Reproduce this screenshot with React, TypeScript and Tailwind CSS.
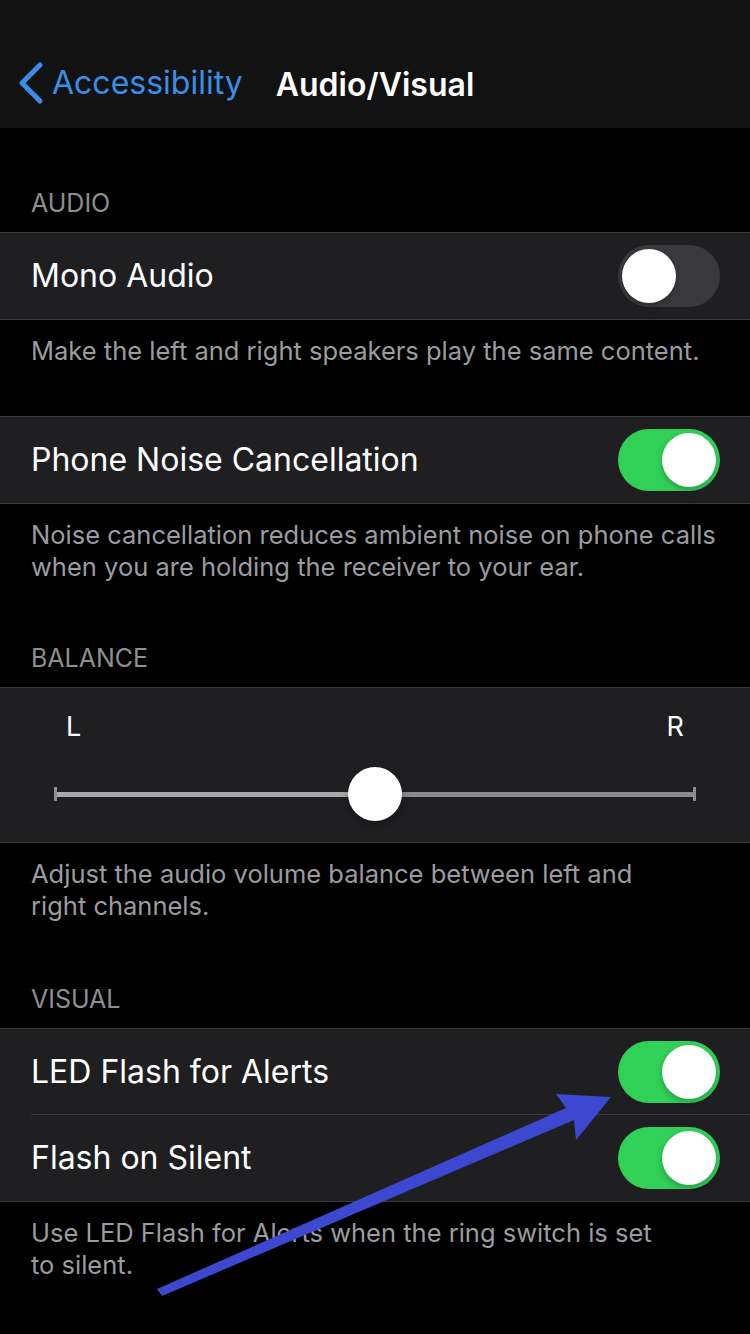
const font = { fontFamily: 'Inter, "Noto Sans", sans-serif' };

function Toggle({ on }: { on: boolean }) {
  return (
    <div
      className={`flex h-[62px] w-[102px] shrink-0 items-center rounded-full p-[4px] ${
        on ? 'justify-end bg-[#31d158]' : 'justify-start bg-[#3a3a3d]'
      }`}
    >
      <div className="h-[54px] w-[54px] rounded-full bg-white shadow-[0_3px_6px_rgba(0,0,0,0.25)]" />
    </div>
  );
}

function SectionLabel({ children }: { children: string }) {
  return (
    <div className="h-[32px] px-[31px] text-[25px] leading-[32px] text-[#8e8e93]">{children}</div>
  );
}

function Footer({ children }: { children: React.ReactNode }) {
  return (
    <p className="px-[31px] pt-[15px] text-[25.5px] leading-[32px] text-[#9b9ba0]">{children}</p>
  );
}

function Row({ label, on, divider }: { label: string; on: boolean; divider?: boolean }) {
  return (
    <div className="pl-[31px]">
      <div
        className={`flex h-[86px] items-center justify-between pr-[30px] ${
          divider ? 'border-b border-[#39393b]' : ''
        }`}
      >
        <span className="text-[32px] text-white">{label}</span>
        <Toggle on={on} />
      </div>
    </div>
  );
}

export default function App() {
  return (
    <div className="relative h-[1334px] w-[750px] overflow-hidden bg-black" style={font}>
      {/* nav bar */}
      <header className="relative flex h-[128px] items-end bg-[#121212] pb-[23px]">
        <div className="flex items-center pl-[16px]">
          <svg width="30" height="44" viewBox="0 0 30 44" className="mr-[6px]">
            <path
              d="M24 4 L6 22 L24 40"
              fill="none"
              stroke="#3a8ee8"
              strokeWidth="5"
              strokeLinecap="round"
              strokeLinejoin="round"
            />
          </svg>
          <span className="text-[32px] leading-[40px] text-[#3a8ee8]">Accessibility</span>
        </div>
        <span className="absolute left-0 right-0 bottom-[23px] text-center text-[32px] font-semibold leading-[40px] text-white">
          Audio/Visual
        </span>
      </header>

      {/* audio */}
      <div className="pt-[59px]">
        <SectionLabel>AUDIO</SectionLabel>
        <div className="mt-[13px] border-y border-[#39393b] bg-[#1f1f21]">
          <Row label="Mono Audio" on={false} />
        </div>
        <Footer>Make the left and right speakers play the same content.</Footer>
      </div>

      <div className="pt-[49px]">
        <div className="border-y border-[#39393b] bg-[#1f1f21]">
          <Row label="Phone Noise Cancellation" on={true} />
        </div>
        <Footer>
          Noise cancellation reduces ambient noise on phone calls
          <br />
          when you are holding the receiver to your ear.
        </Footer>
      </div>

      {/* balance */}
      <div className="pt-[59px]">
        <SectionLabel>BALANCE</SectionLabel>
        <div className="mt-[13px] border-y border-[#39393b] bg-[#1f1f21]">
          <div className="flex h-[154px] flex-col px-[54px]">
            <div className="flex justify-between px-[12px] pt-[22px] text-[27px] leading-[34px] text-white">
              <span>L</span>
              <span>R</span>
            </div>
            <div className="relative mt-[43px] flex h-[14px] items-center">
              <div className="h-[14px] w-[3px] bg-[#8e8e90]" />
              <div className="h-[5px] flex-1 bg-[#a9a9ab]" />
              <div className="h-[5px] flex-1 bg-[#8a8a8c]" />
              <div className="h-[14px] w-[3px] bg-[#8e8e90]" />
              <div className="absolute left-1/2 top-1/2 h-[54px] w-[54px] -translate-x-1/2 -translate-y-1/2 rounded-full bg-white shadow-[0_3px_8px_rgba(0,0,0,0.3)]" />
            </div>
          </div>
        </div>
        <Footer>
          Adjust the audio volume balance between left and
          <br />
          right channels.
        </Footer>
      </div>

      {/* visual */}
      <div className="pt-[61px]">
        <SectionLabel>VISUAL</SectionLabel>
        <div className="mt-[13px] border-y border-[#39393b] bg-[#1f1f21]">
          <Row label="LED Flash for Alerts" on={true} divider />
          <Row label="Flash on Silent" on={true} />
        </div>
        <Footer>
          Use LED Flash for Alerts when the ring switch is set
          <br />
          to silent.
        </Footer>
      </div>

      {/* annotation arrow */}
      <svg
        className="pointer-events-none absolute left-0 top-0"
        width="750"
        height="1334"
        viewBox="0 0 750 1334"
      >
        <polygon
          points="157,1289 162,1296 574,1120 576,1140 611,1097 556,1094 566,1108"
          fill="#3c48cf"
        />
      </svg>
    </div>
  );
}
